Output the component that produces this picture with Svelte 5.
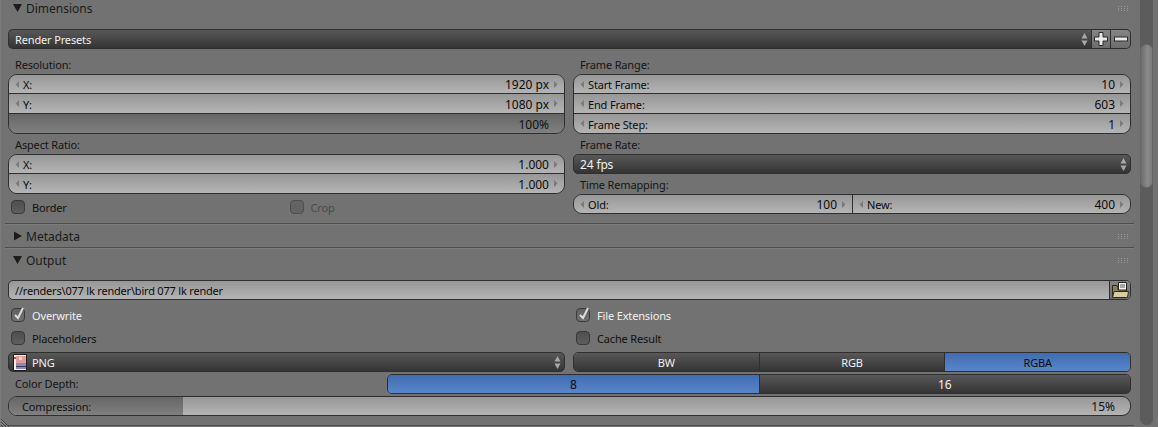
<script>
	const resolution = [
		{ label: 'X:', value: '1920 px' },
		{ label: 'Y:', value: '1080 px' }
	];
	const aspect = [
		{ label: 'X:', value: '1.000' },
		{ label: 'Y:', value: '1.000' }
	];
	const frames = [
		{ label: 'Start Frame:', value: '10' },
		{ label: 'End Frame:', value: '603' },
		{ label: 'Frame Step:', value: '1' }
	];
	const channels = [
		{ label: 'BW', on: false },
		{ label: 'RGB', on: false },
		{ label: 'RGBA', on: true }
	];
</script>

{#snippet tri(dir)}
	<svg class="tri" width="10" height="10" viewBox="0 0 10 10">
		{#if dir === 'down'}
			<path d="M0 1 H9 L4.5 9 Z" fill="#1c1c1c" />
		{:else}
			<path d="M1 0.5 L9 5 L1 9.5 Z" fill="#1c1c1c" />
		{/if}
	</svg>
{/snippet}

{#snippet grip()}
	<svg class="grip" width="11" height="5" viewBox="0 0 11 5">
		{#each [0, 3, 6, 9] as x}
			<rect {x} y="0" width="1" height="1" fill="#9a9a9a" />
			<rect {x} y="2" width="1" height="1" fill="#9a9a9a" />
			<rect {x} y="4" width="1" height="1" fill="#9a9a9a" />
		{/each}
	</svg>
{/snippet}

{#snippet updown()}
	<svg class="updown" width="7" height="15" viewBox="0 0 7 15">
		<path d="M3.5 1 L6.5 6.5 H0.5 Z" fill="#a8a8a8" />
		<path d="M0.5 8.5 H6.5 L3.5 14 Z" fill="#a8a8a8" />
	</svg>
{/snippet}

{#snippet arrow(dir)}
	<svg class="arrow" width="4" height="7" viewBox="0 0 4 7">
		{#if dir === 'left'}
			<path d="M4 0 V7 L0.5 3.5 Z" fill="#7a7a7a" />
		{:else}
			<path d="M0 0 V7 L3.5 3.5 Z" fill="#7a7a7a" />
		{/if}
	</svg>
{/snippet}

{#snippet num(row)}
	<div class="num">
		{@render arrow('left')}
		<span class="lbl">{row.label}</span>
		<span class="val">{row.value}</span>
		{@render arrow('right')}
	</div>
{/snippet}

{#snippet check(label, on, cls)}
	<div class="check {cls}">
		<span class="box">
			{#if on}
				<svg width="14" height="14" viewBox="0 0 14 14">
					<path d="M4 8 L7 11 L12 1" fill="none" stroke="#dcdcdc" stroke-width="2" />
				</svg>
			{/if}
		</span>
		<span>{label}</span>
	</div>
{/snippet}

<div class="window">
	<div class="panel">
		<div class="head first">
			{@render tri('down')}
			<span>Dimensions</span>
			{@render grip()}
		</div>

		<div class="presets">
			<div class="drop">
				<span>Render Presets</span>
				{@render updown()}
			</div>
			<div class="tool">
				<svg width="16" height="16" viewBox="0 0 16 16">
					<path d="M6 1.5 H10 V6 H14.5 V10 H10 V14.5 H6 V10 H1.5 V6 H6 Z" fill="#e8e8e8" stroke="#2a2a2a" stroke-width="1" />
				</svg>
			</div>
			<div class="tool">
				<svg width="16" height="16" viewBox="0 0 16 16">
					<rect x="1.5" y="6" width="13" height="4" fill="#e8e8e8" stroke="#2a2a2a" stroke-width="1" />
				</svg>
			</div>
		</div>

		<div class="cols">
			<div class="col">
				<div class="cap">Resolution:</div>
				<div class="group">
					{#each resolution as row}
						{@render num(row)}
					{/each}
					<div class="pct"><span>100%</span></div>
				</div>
				<div class="cap second">Aspect Ratio:</div>
				<div class="group">
					{#each aspect as row}
						{@render num(row)}
					{/each}
				</div>
				<div class="pair">
					{@render check('Border', false, 'dark')}
					{@render check('Crop', false, 'off')}
				</div>
			</div>
			<div class="col">
				<div class="cap">Frame Range:</div>
				<div class="group">
					{#each frames as row}
						{@render num(row)}
					{/each}
				</div>
				<div class="cap second">Frame Rate:</div>
				<div class="drop alone">
					<span>24 fps</span>
					{@render updown()}
				</div>
				<div class="cap second">Time Remapping:</div>
				<div class="group across">
					{@render num({ label: 'Old:', value: '100' })}
					{@render num({ label: 'New:', value: '400' })}
				</div>
			</div>
		</div>

		<div class="head ruled short">
			{@render tri('right')}
			<span>Metadata</span>
			{@render grip()}
		</div>
		<div class="head ruled">
			{@render tri('down')}
			<span>Output</span>
			{@render grip()}
		</div>

		<div class="path">
			<span class="path-text">//renders\077 lk render\bird 077 lk render</span>
			<div class="folder">
				<svg width="17" height="17" viewBox="0 0 17 17">
					<path d="M6.5 0.5 H14.5 V9 H6.5 Z" fill="#f4f4f0" stroke="#222" />
					<path d="M8 3 H13 M8 5 H13" stroke="#555" />
					<path d="M0.5 3.5 H5 L6 5.5 V8 H14 V10 H3 L1.5 15.5 H0.5 Z" fill="#8f7f50" stroke="#2a2a20" />
					<path d="M0.5 15.5 L2 9.5 H16.5 L15.5 15.5 Z" fill="#d8cda0" stroke="#2a2a20" />
				</svg>
			</div>
		</div>

		<div class="pair row-one">
			{@render check('Overwrite', true, 'light')}
			{@render check('File Extensions', true, 'light')}
		</div>
		<div class="pair row-two">
			{@render check('Placeholders', false, 'dark')}
			{@render check('Cache Result', false, 'dark')}
		</div>

		<div class="cols format">
			<div class="drop png">
				<svg class="png-icon" width="14" height="17" viewBox="0 0 14 17">
					<path d="M0.5 0.5 H13.5 V16.5 H0.5 Z" fill="#f2f0ea" stroke="#1e1e1e" />
					<rect x="3" y="2" width="10" height="7" fill="#e39b96" />
					<rect x="6" y="3" width="3" height="3" fill="#f6dcd4" />
					<rect x="3" y="9" width="10" height="6" fill="#8d86b8" />
					<rect x="3" y="12" width="10" height="1" fill="#3d3a5c" />
					<rect x="1" y="3" width="2" height="2" fill="#d8453e" />
				</svg>
				<span>PNG</span>
				{@render updown()}
			</div>
			<div class="seg">
				{#each channels as c}
					<div class="opt" class:on={c.on}>{c.label}</div>
				{/each}
			</div>
		</div>

		<div class="depth">
			<div class="cap depth-cap">Color Depth:</div>
			<div class="seg wide">
				<div class="opt on">8</div>
				<div class="opt">16</div>
			</div>
		</div>

		<div class="comp">
			<div class="fill"><span>Compression:</span></div>
			<span class="comp-val">15%</span>
		</div>
		<div class="end"></div>
	</div>

	<div class="scroll">
		<div class="thumb"></div>
	</div>

	<!-- area corner handle -->
	<svg class="corner" width="10" height="10" viewBox="0 0 10 10">
		<path d="M0 1 L9 10 M0 4 L6 10 M0 7 L3 10" stroke="#3e3e3e" fill="none" />
		<path d="M0 2 L8 10 M0 5 L5 10" stroke="#909090" fill="none" />
	</svg>
</div>

<style>
	:global(body) {
		margin: 0;
		background: #727272;
	}

	.window {
		display: flex;
		position: relative;
		width: 1158px;
		height: 427px;
		overflow: hidden;
		background: #727272;
		font-family: "Noto Sans", sans-serif;
		font-size: 11px;
		letter-spacing: -0.15px;
		color: #111;
		box-sizing: border-box;
		border-left: 1px solid #7c7c7c;
	}

	.corner {
		position: absolute;
		left: -1px;
		bottom: 0;
	}

	.panel {
		width: 1133px;
		padding-left: 4px;
		box-sizing: border-box;
		flex: none;
	}

	.head {
		display: flex;
		align-items: center;
		height: 23px;
		font-size: 12px;
		letter-spacing: 0;
		padding: 2px 5px 0 3px;
		box-sizing: content-box;
		color: #1a1a1a;
	}

	.head.ruled {
		height: 21px;
		border-top: 1px solid #4e4e4e;
		box-shadow: inset 0 1px 0 #7c7c7c;
	}

	.head.first {
		height: 17px;
		padding-top: 0;
		margin-bottom: 12px;
	}

	.head.short {
		margin-top: 8px;
	}

	.tri {
		margin: 0 3px 2px 5px;
		flex: none;
	}

	.grip {
		margin-left: auto;
		flex: none;
	}

	.presets {
		display: flex;
		margin: 0 3px 0 3px;
		height: 20px;
		box-sizing: border-box;
	}

	.drop {
		display: flex;
		align-items: center;
		justify-content: space-between;
		height: 20px;
		box-sizing: border-box;
		padding: 0 3px 0 6px;
		background: linear-gradient(#585858, #343434);
		border: 1px solid #2f2f2f;
		border-radius: 5px;
		color: #f0f0f0;
	}

	.presets .drop {
		flex: 1;
		border-radius: 5px 0 0 5px;
		border-right: none;
	}

	.alone span {
		font-size: 12px;
	}

	.tool {
		width: 20px;
		height: 20px;
		box-sizing: border-box;
		display: flex;
		align-items: center;
		justify-content: center;
		background: linear-gradient(#858585, #6c6c6c);
		border: 1px solid #2f2f2f;
	}

	.tool + .tool {
		border-left: none;
		border-radius: 0 5px 5px 0;
	}

	.cols {
		display: grid;
		grid-template-columns: 557px 558px;
		column-gap: 8px;
		margin-left: 3px;
		width: 1123px;
	}

	.cap {
		height: 14px;
		line-height: 14px;
		padding-left: 7px;
		color: #151515;
		margin-top: 9px;
		margin-bottom: 2px;
	}

	.cap.second {
		margin-top: 4px;
	}

	.group {
		border: 1px solid #2f2f2f;
		border-radius: 9px;
		overflow: hidden;
	}

	.group.across {
		display: grid;
		grid-template-columns: 278px 1fr;
	}

	.num {
		display: flex;
		align-items: center;
		height: 18px;
		box-sizing: border-box;
		padding: 0 6px;
		background: linear-gradient(#979797, #b4b4b4);
		color: #0c0c0c;
	}

	.num + .num,
	.num + .pct {
		border-top: 1px solid #2f2f2f;
		height: 20px;
	}

	.group.across .num + .num {
		border-top: none;
		border-left: 1px solid #2f2f2f;
		height: 18px;
	}

	.arrow {
		flex: none;
	}

	.lbl {
		margin-left: 4px;
		padding-top: 1px;
	}

	.val {
		margin-left: auto;
		margin-right: 5px;
		padding-top: 1px;
		font-size: 12px;
		letter-spacing: 0;
	}

	.pct {
		display: flex;
		align-items: center;
		justify-content: flex-end;
		box-sizing: border-box;
		padding-right: 15px;
		padding-top: 1px;
		font-size: 12px;
		letter-spacing: 0;
		background: linear-gradient(#666666, #808080);
	}

	.pair {
		display: grid;
		grid-template-columns: 1fr 1fr;
	}

	.col > .pair {
		margin-top: 5px;
	}

	.check {
		display: flex;
		align-items: center;
		gap: 7px;
		height: 16px;
		padding-left: 3px;
	}

	.box {
		width: 14px;
		height: 14px;
		box-sizing: border-box;
		border: 1px solid #3a3a3a;
		border-radius: 4px;
		background: linear-gradient(#4e4e4e, #5e5e5e);
		flex: none;
	}

	.box svg {
		display: block;
		margin: -2px 0 0 -1px;
		overflow: visible;
	}

	.check.light {
		color: #f0f0f0;
	}

	.check.light .box {
		background: linear-gradient(#626262, #707070);
	}

	.check.off {
		color: #4a4a4a;
	}

	.check.off .box {
		background: #636363;
		border-color: #4e4e4e;
	}

	.path {
		display: flex;
		height: 20px;
		box-sizing: border-box;
		margin: 9px 3px 0 3px;
		background: linear-gradient(#979797, #b4b4b4);
		border: 1px solid #2f2f2f;
		border-radius: 5px;
		overflow: hidden;
	}

	.path-text {
		flex: 1;
		line-height: 20px;
		padding-left: 6px;
		letter-spacing: -0.2px;
		color: #0c0c0c;
	}

	.folder {
		width: 20px;
		background: linear-gradient(#858585, #6c6c6c);
		border-left: 1px solid #2f2f2f;
		display: flex;
		align-items: center;
		justify-content: center;
	}

	.row-one,
	.row-two {
		width: 1123px;
		margin-left: 3px;
		grid-template-columns: 565px 558px;
		height: 18px;
		align-items: center;
	}

	.row-one {
		margin-top: 6px;
	}

	.row-two {
		margin-top: 5px;
	}

	.format {
		margin-top: 5px;
	}

	.png {
		justify-content: flex-start;
		padding-left: 4px;
	}

	.png-icon {
		margin-right: 5px;
		flex: none;
	}

	.png .updown {
		margin-left: auto;
	}

	.seg {
		display: flex;
		height: 20px;
		box-sizing: border-box;
		border: 1px solid #2f2f2f;
		border-radius: 5px;
		overflow: hidden;
	}

	.opt {
		flex: 1;
		text-align: center;
		line-height: 19px;
		background: linear-gradient(#585858, #343434);
		color: #f0f0f0;
	}

	.wide .opt {
		font-size: 12px;
	}

	.opt + .opt {
		border-left: 1px solid #2f2f2f;
	}

	.opt.on {
		background: linear-gradient(#3f6cb0, #5a85cb);
		color: #0c0c0c;
	}

	.depth {
		display: grid;
		grid-template-columns: 379px 744px;
		margin: 2px 0 0 3px;
		width: 1123px;
	}

	.depth-cap {
		margin: 0;
		line-height: 20px;
		height: 20px;
	}

	.comp {
		display: flex;
		position: relative;
		justify-content: flex-end;
		height: 20px;
		box-sizing: border-box;
		margin: 2px 3px 0 3px;
		width: 1123px;
		border: 1px solid #2f2f2f;
		border-radius: 9px;
		overflow: hidden;
		background: linear-gradient(#979797, #b4b4b4);
	}

	.fill {
		position: absolute;
		left: 0;
		top: 0;
		bottom: 0;
		width: 174px;
		padding-left: 13px;
		box-sizing: border-box;
		line-height: 20px;
		background: linear-gradient(#666666, #808080);
	}

	.comp-val {
		line-height: 20px;
		padding-right: 15px;
		font-size: 12px;
		letter-spacing: 0;
	}

	.end {
		margin-top: 9px;
		border-top: 1px solid #4e4e4e;
	}

	.scroll {
		width: 13px;
		margin-left: 6px;
		height: 425px;
		flex: none;
		background: #5c5c5c;
		border-radius: 0 0 6px 6px;
		padding-top: 44px;
		box-sizing: border-box;
	}

	.thumb {
		height: 144px;
		border-radius: 6px;
		background: linear-gradient(90deg, #6c6c6c, #8a8a8a 60%, #7c7c7c);
		border: 1px solid #666;
		box-sizing: border-box;
	}
</style>
